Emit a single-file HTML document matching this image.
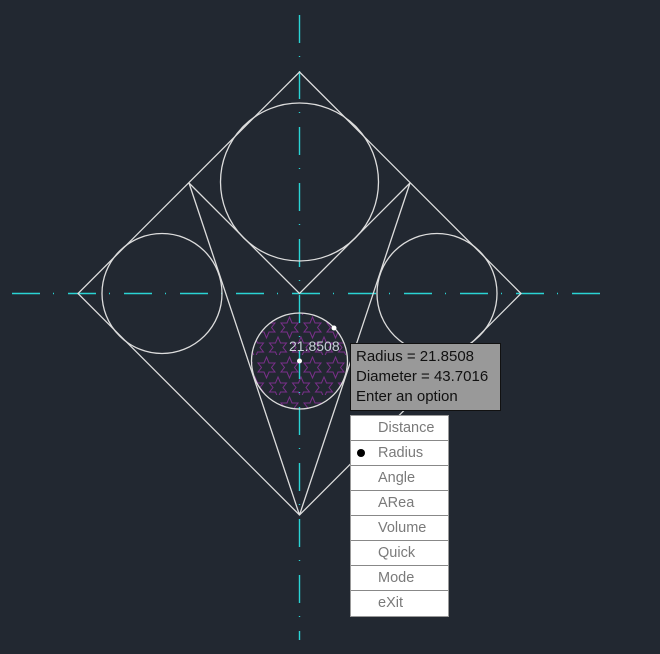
<!DOCTYPE html><html><head><style>
body{margin:0;background:#222831;width:660px;height:654px;overflow:hidden;position:relative;font-family:"Liberation Sans",sans-serif}
.tip{position:absolute;left:350px;top:343px;width:151px;height:68px;background:#999;border:1px solid #111;font-size:15px;line-height:20px;color:#111;padding:3px 5px;box-sizing:border-box}
.menu{position:absolute;left:350px;top:415px;width:99px;background:#fff;border:1px solid #999;box-sizing:border-box}
.menu div{height:25px;line-height:25px;border-bottom:1px solid #888;box-sizing:border-box;padding-left:27px;font-size:14.5px;color:#7a7a7a;position:relative}
.menu div:last-child{border-bottom:none}
.dot{position:absolute;left:6px;top:8px;width:8px;height:8px;border-radius:50%;background:#000}
</style></head><body>
<svg width="660" height="654" style="position:absolute;left:0;top:0">
<defs>
<pattern id="st" width="23" height="40" patternUnits="userSpaceOnUse" x="255" y="315">
<path id="s" d="M11.5 2 L14 8 L20 8 L16.5 12.5 L20 17 L14 17 L11.5 23 L9 17 L3 17 L6.5 12.5 L3 8 L9 8 Z" fill="none" stroke="#7a2f8a" stroke-width="1"/>
<path d="M0 22 L2.5 28 L8.5 28 L5 32.5 L8.5 37 L2.5 37 L0 43 L-2.5 37 L-8.5 37 L-5 32.5 L-8.5 28 L-2.5 28 Z M23 22 L25.5 28 L31.5 28 L28 32.5 L31.5 37 L25.5 37 L23 43 L20.5 37 L14.5 37 L18 32.5 L14.5 28 L20.5 28 Z" fill="none" stroke="#7a2f8a" stroke-width="1"/>
</pattern>
</defs>
<circle cx="299.5" cy="361" r="48" fill="url(#st)"/>
<g stroke="#2ad4d4" stroke-width="1.4" fill="none">
<line x1="299.5" y1="15" x2="299.5" y2="640" stroke-dasharray="28 13 1 14"/>
<line x1="12" y1="293.5" x2="612" y2="293.5" stroke-dasharray="28 13 1 14"/>
</g>
<g stroke="#ddd" stroke-width="1.3" fill="none">
<polygon points="299.5,72 521,293.5 299.5,515 78,293.5"/>
<polyline points="189,183 299.5,293.5 410,183"/>
<line x1="189" y1="183" x2="299.5" y2="515"/>
<line x1="410" y1="183" x2="299.5" y2="515"/>
<circle cx="299.5" cy="182" r="79"/>
<circle cx="162" cy="293.5" r="60"/>
<circle cx="437" cy="293.5" r="60"/>
<circle cx="299.5" cy="361" r="48"/>
</g>
<circle cx="299.5" cy="361" r="2.5" fill="#fff"/>
<circle cx="334" cy="328" r="2.5" fill="#fff"/>
<text x="289" y="351" font-family="Liberation Sans" font-size="14" fill="#c8d0d8">21.8508</text>
</svg>
<div class="tip">Radius = 21.8508<br>Diameter = 43.7016<br>Enter an option</div>
<div class="menu">
<div>Distance</div><div><span class="dot"></span>Radius</div><div>Angle</div><div>ARea</div><div>Volume</div><div>Quick</div><div>Mode</div><div>eXit</div>
</div>
</body></html>
